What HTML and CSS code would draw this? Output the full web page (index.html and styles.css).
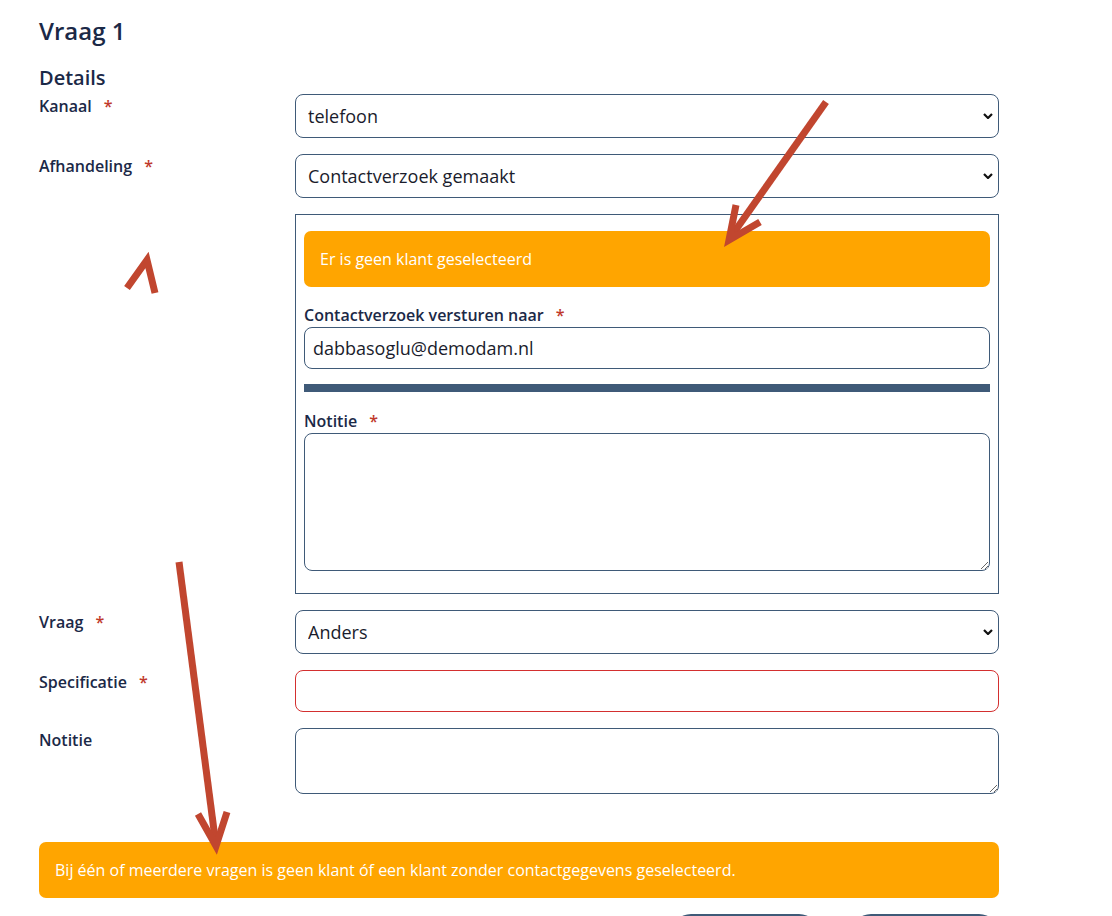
FILE: index.html
```html
<!DOCTYPE html>
<html lang="nl">
<head>
    <meta charset="UTF-8">
    <meta name="viewport" content="width=device-width, initial-scale=1.0">
    <title>Vraag 1</title>
    <link rel="stylesheet" href="styles.css">
</head>
<body>
<main class="page">
    <h1 class="title">Vraag 1</h1>
    <h2 class="section">Details</h2>

    <div class="form">
        <label class="label" for="kanaal">Kanaal <span class="req">*</span></label>
        <div class="select-wrap">
            <select id="kanaal" class="field">
                <option>telefoon</option>
            </select>
            <svg class="chevron" viewBox="0 0 10 6"><path d="M1 1l4 4 4-4"/></svg>
        </div>

        <label class="label" for="afhandeling">Afhandeling <span class="req">*</span></label>
        <div class="select-wrap">
            <select id="afhandeling" class="field">
                <option>Contactverzoek gemaakt</option>
            </select>
            <svg class="chevron" viewBox="0 0 10 6"><path d="M1 1l4 4 4-4"/></svg>
        </div>

        <div></div>
        <div class="subform">
            <div class="alert">Er is geen klant geselecteerd</div>

            <label class="label sub-label" for="naar">Contactverzoek versturen naar <span class="req">*</span></label>
            <input id="naar" class="field input" type="text" value="dabbasoglu@demodam.nl">

            <div class="divider"></div>

            <label class="label sub-label" for="notitie-cv">Notitie <span class="req">*</span></label>
            <textarea id="notitie-cv" class="field area-large"></textarea>
        </div>

        <label class="label" for="vraag">Vraag <span class="req">*</span></label>
        <div class="select-wrap">
            <select id="vraag" class="field">
                <option>Anders</option>
            </select>
            <svg class="chevron" viewBox="0 0 10 6"><path d="M1 1l4 4 4-4"/></svg>
        </div>

        <label class="label" for="specificatie">Specificatie <span class="req">*</span></label>
        <input id="specificatie" class="field input invalid" type="text">

        <label class="label" for="notitie">Notitie</label>
        <textarea id="notitie" class="field area-small"></textarea>
    </div>

    <div class="alert alert-wide">Bij één of meerdere vragen is geen klant óf een klant zonder contactgegevens geselecteerd.</div>

    <!-- knoppen vallen buiten beeld, alleen de bovenrand is zichtbaar -->
    <div class="actions">
        <button class="btn" aria-label="Annuleren"></button>
        <button class="btn" aria-label="Opslaan"></button>
    </div>

    <!-- annotaties uit de schermafdruk -->
    <svg class="marks" viewBox="0 0 1112 916">
        <path d="M826 102 L730 238"/>
        <path d="M736 205 L729 240 L760 222"/>
        <path d="M127 288 L147 260 L155 293"/>
        <path d="M179 562 L215 838"/>
        <path d="M198 814 L216 846 L227 812"/>
    </svg>
</main>
</body>
</html>
```

FILE: styles.css
```css
:root {
    --text-color: #1b2947;
    --border-color: #3f5a78;
    --req-color: #c0392b;
    --warn-bg: #ffa500;
    --error-color: #d32f2f;
    --mark-color: #c1462f;
}
html, body {
    margin: 0;
    background: #ffffff;
}
body {
    font-family: 'Open Sans', 'Noto Sans', sans-serif;
    color: var(--text-color);
    height: 916px;
    overflow: hidden;
}
.page {
    position: relative;
    width: 960px;
    padding: 16px 0 0 39px;
}
.title {
    margin: 0;
    font-size: 24px;
    font-weight: 600;
    line-height: 30px;
}
.section {
    margin: 20px 0 4px;
    font-size: 20px;
    font-weight: 600;
    line-height: 24px;
}
.form {
    display: grid;
    grid-template-columns: 256px 704px;
    row-gap: 16px;
    align-items: start;
}
.label {
    font-size: 16px;
    font-weight: 600;
    line-height: 24px;
}
.req {
    color: var(--req-color);
    margin-left: 8px;
}
.field {
    box-sizing: border-box;
    width: 100%;
    font-family: 'Open Sans', 'Noto Sans', sans-serif;
    font-size: 18px;
    color: #1a1c2c;
    background: #ffffff;
    border: 1px solid var(--border-color);
    border-radius: 8px;
    outline: none;
    margin: 0;
}
.select-wrap {
    position: relative;
}
select.field {
    appearance: none;
    height: 44px;
    padding: 0 12px;
}
.chevron {
    position: absolute;
    right: 6px;
    top: 19px;
    width: 10px;
    height: 6px;
    fill: none;
    stroke: #111111;
    stroke-width: 2.2;
    pointer-events: none;
}
.input {
    height: 42px;
    padding: 0 8px;
}
.invalid {
    border-color: var(--error-color);
}
textarea.field {
    display: block;
    padding: 8px;
    resize: vertical;
}
.area-large {
    height: 138px;
}
.area-small {
    height: 66px;
}
.subform {
    border: 1px solid var(--border-color);
    padding: 16px 8px 22px;
    display: flex;
    flex-direction: column;
}
.alert {
    background: var(--warn-bg);
    color: #ffffff;
    border-radius: 7px;
    font-size: 16px;
    line-height: 24px;
    padding: 16px;
    margin-bottom: 16px;
}
.divider {
    height: 8px;
    background: var(--border-color);
    margin: 15px 0 17px;
}
.alert-wide {
    margin: 48px 0 0;
}
.actions {
    display: flex;
    justify-content: flex-end;
    gap: 32px;
    margin-top: 16px;
}
.btn {
    width: 148px;
    height: 40px;
    border: none;
    border-radius: 20px;
    background: var(--border-color);
}
.marks {
    position: absolute;
    top: 0;
    left: 0;
    width: 1112px;
    height: 916px;
    fill: none;
    stroke: var(--mark-color);
    stroke-width: 7;
    pointer-events: none;
}
```
